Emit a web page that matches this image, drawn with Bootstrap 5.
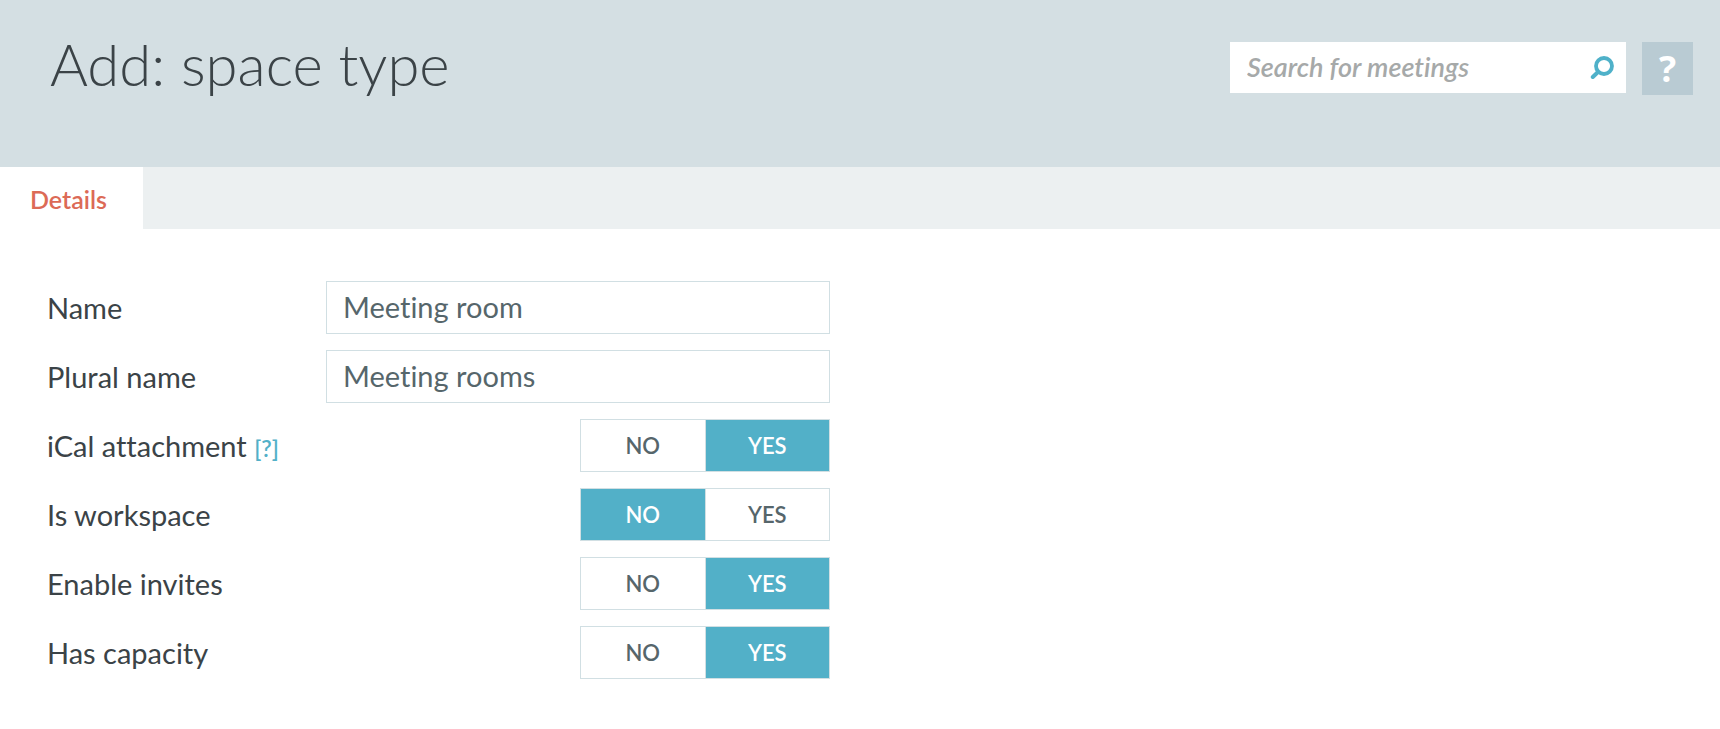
<!DOCTYPE html>
<html lang="en">
<head>
<meta charset="utf-8">
<meta name="viewport" content="width=device-width, initial-scale=1">
<title>Add: space type</title>
<link rel="stylesheet" href="https://cdn.jsdelivr.net/npm/bootstrap@5.3.0/dist/css/bootstrap.min.css">
<style>
:root { --line: #d1dfe3; --accent: #52b0c8; --slate: #56666b; --ink: #3b4347; }
body { font-family: Lato, "Open Sans", sans-serif; color: var(--ink); background: #fff; }
body, input { font-variant-ligatures: none; }
.page-head { background: #d4dfe3; padding: 28px 27px 68px 50px; }
.page-title { font-size: 58px; line-height: 71px; font-weight: 300; }
.head-tools { padding-top: 14px; gap: 16px; }
.search-box { width: 396px; height: 51px; background: #fff; padding: 0 12px 2px 17px; }
.search-box input { font-size: 27px; line-height: 32px; font-style: italic; font-weight: 600; color: var(--slate); }
.search-box input::placeholder { color: #a6a9a9; opacity: 1; }
.help-btn { width: 51px; height: 53px; background: #b9cbd3; color: #fff; font: 700 36px/53px "Open Sans", sans-serif; }
.tab-strip { background: #ecf0f1; }
.tab-strip .nav-link { padding: 16px 36px 14px 30px; font-size: 25px; line-height: 32px; font-weight: 600; color: #dc6a56; background: #fff; border-radius: 0; }
.details-form { padding: 52px 26px 50px 47px; }
.field-list { max-width: 783px; gap: 16px; }
.field-label { width: 279px; font-size: 29px; line-height: 36px; padding-top: 1px; }
.hint-link { font-size: 23px; line-height: 23px; font-weight: 600; color: var(--accent); }
.field-input { height: 53px; border: 1px solid var(--line); border-radius: 0; padding: 0 16px 2px; font-size: 29px; color: var(--slate); }
.toggle { width: 250px; height: 53px; border: 1px solid var(--line); }
.toggle label { flex: 1 1 0; display: flex; align-items: center; justify-content: center; font-size: 22px; line-height: 28px; font-weight: 600; color: var(--slate); cursor: pointer; }
.toggle label + input + label { border-left: 1px solid var(--line); }
.toggle .btn-check:checked + label { background: var(--accent); color: #fff; }
.toggle .btn-check:focus-visible + label { outline: 2px solid var(--ink); }
</style>
</head>
<body>
<header class="page-head d-flex justify-content-between align-items-start">
  <h1 class="page-title m-0">Add: space type</h1>
  <div class="head-tools d-flex">
    <form class="search-box d-flex align-items-center" role="search">
      <input class="border-0 bg-transparent p-0 flex-grow-1" type="search" placeholder="Search for meetings" aria-label="Search for meetings">
      <button class="btn border-0 p-0 d-flex" type="button" aria-label="Search">
        <svg width="25" height="25" viewBox="0 0 25 25" fill="none" stroke="#4fb1c9" aria-hidden="true"><circle cx="15" cy="12" r="8" stroke-width="3.8"/><path d="M9 18L3.8 23" stroke-width="4" stroke-linecap="round"/></svg>
      </button>
    </form>
    <button class="help-btn border-0 p-0" type="button">?</button>
  </div>
</header>
<nav class="tab-strip nav">
  <a class="nav-link active" href="#details" aria-current="page">Details</a>
</nav>
<main id="details">
  <form class="details-form">
    <div class="field-list d-flex flex-column">
      <div class="d-flex align-items-center">
        <label class="field-label flex-shrink-0" for="name">Name</label>
        <input class="form-control field-input" id="name" type="text" value="Meeting room">
      </div>
      <div class="d-flex align-items-center">
        <label class="field-label flex-shrink-0" for="plural">Plural name</label>
        <input class="form-control field-input" id="plural" type="text" value="Meeting rooms">
      </div>
      <div class="d-flex align-items-center justify-content-between" role="radiogroup" aria-labelledby="ical-label">
        <div class="field-label"><span id="ical-label">iCal attachment</span> <a class="hint-link text-decoration-none" href="#ical-help">[?]</a></div>
        <div class="toggle d-flex">
          <input class="btn-check" type="radio" name="ical" id="ical-no"><label for="ical-no">NO</label>
          <input class="btn-check" type="radio" name="ical" id="ical-yes" checked><label for="ical-yes">YES</label>
        </div>
      </div>
      <div class="d-flex align-items-center justify-content-between" role="radiogroup" aria-labelledby="workspace-label">
        <div class="field-label" id="workspace-label">Is workspace</div>
        <div class="toggle d-flex">
          <input class="btn-check" type="radio" name="workspace" id="workspace-no" checked><label for="workspace-no">NO</label>
          <input class="btn-check" type="radio" name="workspace" id="workspace-yes"><label for="workspace-yes">YES</label>
        </div>
      </div>
      <div class="d-flex align-items-center justify-content-between" role="radiogroup" aria-labelledby="invites-label">
        <div class="field-label" id="invites-label">Enable invites</div>
        <div class="toggle d-flex">
          <input class="btn-check" type="radio" name="invites" id="invites-no"><label for="invites-no">NO</label>
          <input class="btn-check" type="radio" name="invites" id="invites-yes" checked><label for="invites-yes">YES</label>
        </div>
      </div>
      <div class="d-flex align-items-center justify-content-between" role="radiogroup" aria-labelledby="capacity-label">
        <div class="field-label" id="capacity-label">Has capacity</div>
        <div class="toggle d-flex">
          <input class="btn-check" type="radio" name="capacity" id="capacity-no"><label for="capacity-no">NO</label>
          <input class="btn-check" type="radio" name="capacity" id="capacity-yes" checked><label for="capacity-yes">YES</label>
        </div>
      </div>
    </div>
  </form>
</main>
<script src="https://cdn.jsdelivr.net/npm/bootstrap@5.3.0/dist/js/bootstrap.bundle.min.js"></script>
</body>
</html>
